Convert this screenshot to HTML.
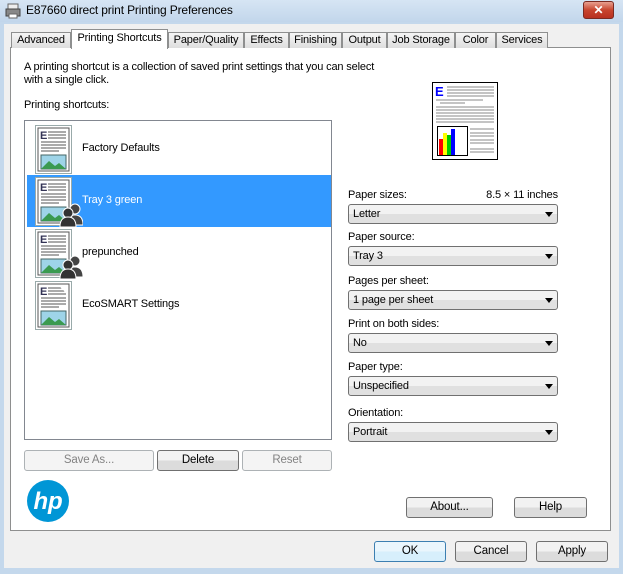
<!DOCTYPE html><html><head><style>
*{margin:0;padding:0;box-sizing:border-box}
body{width:623px;height:574px;position:relative;overflow:hidden;background:#c4d8ec;font-family:"Liberation Sans",sans-serif;font-size:11px;color:#000;letter-spacing:-0.15px}
.a{position:absolute}
.tab{position:absolute;top:32px;height:16px;border:1px solid #8e8f8f;border-bottom:none;background:linear-gradient(#f5f5f5,#dedede);text-align:center;line-height:14px;font-size:11px}
.btn{position:absolute;height:21px;border:1px solid #707070;border-radius:3px;background:linear-gradient(#f2f2f2 50%,#dcdcdc 50%);text-align:center;line-height:19px;font-size:11.5px}
.dis{border-color:#adb2b5;color:#838383;background:#f4f4f4}
.lbl{position:absolute;left:348px;font-size:11px}
.dd{position:absolute;left:348px;width:210px;height:20px;border:1px solid #707070;border-radius:3px;background:linear-gradient(#f2f2f2 50%,#e0e0e0 50%);padding-left:4px;line-height:18px}
.dd:after{content:"";position:absolute;right:4px;top:7px;border:4px solid transparent;border-top:5px solid #000}
.item{position:absolute;left:2px;width:304px;height:52px}
.item span{position:absolute;left:55px;top:19px}
</style></head><body>
<div class="a" style="left:0;top:0;width:623px;height:22px;background:linear-gradient(#d6e5f4,#c2d6eb)"></div>
<svg class="a" style="left:5px;top:3px" width="16" height="16"><rect x="3" y="1" width="10" height="5" fill="#eee" stroke="#666"/><rect x="1" y="6" width="14" height="7" fill="#888" stroke="#444"/><rect x="4" y="11" width="8" height="4" fill="#fff" stroke="#666"/></svg>
<div class="a" style="left:26px;top:3px;font-size:12px">E87660 direct print Printing Preferences</div>
<div class="a" style="left:583px;top:1px;width:31px;height:18px;border:1px solid #7a2a22;border-radius:3px;background:linear-gradient(#e8a090,#c8452f 50%,#b83020);color:#fff;text-align:center;font-weight:bold;line-height:16px;font-size:12px">✕</div>
<div class="a" style="left:4px;top:24px;width:615px;height:544px;background:#f0f0f0"></div>
<div class="a" style="left:10px;top:47px;width:601px;height:484px;background:#fff;border:1px solid #8e8f8f"></div>
<div class="tab" style="left:11px;width:60px">Advanced</div>
<div class="tab" style="left:168px;width:76px">Paper/Quality</div>
<div class="tab" style="left:244px;width:45px">Effects</div>
<div class="tab" style="left:289px;width:53px">Finishing</div>
<div class="tab" style="left:342px;width:45px">Output</div>
<div class="tab" style="left:387px;width:68px">Job Storage</div>
<div class="tab" style="left:455px;width:41px">Color</div>
<div class="tab" style="left:496px;width:52px">Services</div>
<div class="tab" style="left:71px;width:97px;top:29px;height:20px;background:#fff;line-height:16px">Printing Shortcuts</div>
<div class="a" style="left:24px;top:61px;line-height:13px">A printing shortcut is a collection of saved print settings that you can select<br>with a single click.</div>
<div class="a" style="left:24px;top:99px">Printing shortcuts:</div>
<div class="a" style="left:24px;top:120px;width:308px;height:320px;border:1px solid #828790;background:#fff">
<svg width="0" height="0" style="position:absolute"><defs>
<g id="doc"><rect x="0.5" y="0.5" width="36" height="48" fill="#fff" stroke="#9aa"/><rect x="3" y="3" width="31" height="43" fill="#fff" stroke="#555"/><text x="5" y="14" font-family="Liberation Sans" font-weight="bold" font-size="11" fill="#335">E</text><path d="M13 7h18M13 10h18M13 13h18M6 17h25M6 20h25M6 23h25M6 26h18" stroke="#555"/><rect x="6" y="30" width="25" height="14" fill="#9ed4e8" stroke="#466"/><path d="M6 44l8-8 6 5 4-3 7 6z" fill="#3a9a50"/></g>
<g id="ppl"><circle cx="26" cy="34" r="5" fill="#444" stroke="#fff"/><path d="M18 50q0-10 8-10q8 0 8 10z" fill="#444" stroke="#fff"/><circle cx="19" cy="38" r="5" fill="#333" stroke="#fff"/><path d="M11 52q0-10 8-10q8 0 8 10z" fill="#333" stroke="#fff"/></g>
</defs></svg>
<div class="item" style="top:2px"><svg class="a" style="left:8px;top:2px" width="48" height="52"><use href="#doc"/></svg><span>Factory Defaults</span></div>
<div class="item" style="top:54px;background:#3399ff;color:#fff"><svg class="a" style="left:8px;top:2px" width="48" height="52"><use href="#doc"/><g transform="translate(14,-2)"><use href="#ppl"/></g></svg><span>Tray 3 green</span></div>
<div class="item" style="top:106px"><svg class="a" style="left:8px;top:2px" width="48" height="52"><use href="#doc"/><g transform="translate(14,-2)"><use href="#ppl"/></g></svg><span>prepunched</span></div>
<div class="item" style="top:158px"><svg class="a" style="left:8px;top:2px" width="48" height="52"><use href="#doc"/><path d="M22 3h12v12" fill="#fff" stroke="#555"/></svg><span>EcoSMART Settings</span></div>
</div>
<div class="btn dis" style="left:24px;top:450px;width:130px">Save As...</div>
<div class="btn" style="left:157px;top:450px;width:82px">Delete</div>
<div class="btn dis" style="left:242px;top:450px;width:90px">Reset</div>
<svg class="a" style="left:432px;top:82px" width="66" height="78"><rect x="0.5" y="0.5" width="65" height="77" fill="#fff" stroke="#000"/><text x="3" y="14" font-family="Liberation Sans" font-weight="bold" font-size="13" fill="#00f">E</text><path d="M15 5h47M15 8h47M15 11h47M15 14h47M4 18h47M8 21h25M4 25h58M4 28h58M4 31h58M4 34h58M4 37h58M4 40h58M38 47h24M38 51h24M38 54h24M38 58h24M38 61h24M38 67h24M38 70h24" stroke="#888"/><rect x="5.5" y="44.5" width="30" height="29" fill="#fff" stroke="#000"/><rect x="7" y="57" width="5" height="16" fill="red"/><rect x="11" y="51" width="4" height="22" fill="#ff0"/><rect x="15" y="53" width="4" height="20" fill="#0c0"/><rect x="19" y="47" width="4" height="26" fill="#00f"/></svg>
<div class="lbl" style="top:189px">Paper sizes:</div><div class="a" style="left:470px;top:189px;width:88px;text-align:right">8.5 × 11 inches</div>
<div class="dd" style="top:204px">Letter</div>
<div class="lbl" style="top:231px">Paper source:</div><div class="dd" style="top:246px">Tray 3</div>
<div class="lbl" style="top:275px">Pages per sheet:</div><div class="dd" style="top:290px">1 page per sheet</div>
<div class="lbl" style="top:318px">Print on both sides:</div><div class="dd" style="top:333px">No</div>
<div class="lbl" style="top:361px">Paper type:</div><div class="dd" style="top:376px">Unspecified</div>
<div class="lbl" style="top:407px">Orientation:</div><div class="dd" style="top:422px">Portrait</div>
<svg class="a" style="left:27px;top:480px" width="42" height="42"><circle cx="21" cy="21" r="21" fill="#0096d6"/><text x="21" y="29" text-anchor="middle" font-family="Liberation Sans" font-style="italic" font-weight="bold" font-size="24" fill="#fff">hp</text></svg>
<div class="btn" style="left:406px;top:497px;width:87px">About...</div>
<div class="btn" style="left:514px;top:497px;width:73px">Help</div>
<div class="btn" style="left:374px;top:541px;width:72px;border-color:#3c7fb1;background:linear-gradient(#eaf6fd 50%,#d7effc 50%)">OK</div>
<div class="btn" style="left:455px;top:541px;width:72px">Cancel</div>
<div class="btn" style="left:536px;top:541px;width:72px">Apply</div>
</body></html>
